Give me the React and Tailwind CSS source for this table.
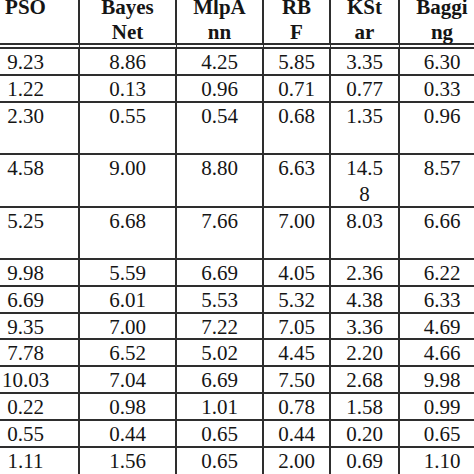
const header = ["PSO", "Bayes\nNet", "MlpA\nnn", "RB\nF", "KSt\nar", "Baggi\nng"];

const rows = [
  { h: "h-[26.5px]", cells: ["9.23", "8.86", "4.25", "5.85", "3.35", "6.30"] },
  { h: "h-[27px]", cells: ["1.22", "0.13", "0.96", "0.71", "0.77", "0.33"] },
  { h: "h-[52.5px]", cells: ["2.30", "0.55", "0.54", "0.68", "1.35", "0.96"] },
  { h: "h-[52.5px]", cells: ["4.58", "9.00", "8.80", "6.63", "14.5\n8", "8.57"] },
  { h: "h-[52.5px]", cells: ["5.25", "6.68", "7.66", "7.00", "8.03", "6.66"] },
  { h: "h-[26.8px]", cells: ["9.98", "5.59", "6.69", "4.05", "2.36", "6.22"] },
  { h: "h-[26.8px]", cells: ["6.69", "6.01", "5.53", "5.32", "4.38", "6.33"] },
  { h: "h-[26.8px]", cells: ["9.35", "7.00", "7.22", "7.05", "3.36", "4.69"] },
  { h: "h-[26.8px]", cells: ["7.78", "6.52", "5.02", "4.45", "2.20", "4.66"] },
  { h: "h-[26.8px]", cells: ["10.03", "7.04", "6.69", "7.50", "2.68", "9.98"] },
  { h: "h-[26.8px]", cells: ["0.22", "0.98", "1.01", "0.78", "1.58", "0.99"] },
  { h: "h-[26.8px]", cells: ["0.55", "0.44", "0.65", "0.44", "0.20", "0.65"] },
  { h: "h-[30px]", cells: ["1.11", "1.56", "0.65", "2.00", "0.69", "1.10"] },
];

const cols = "grid grid-cols-[107px_97px_87px_67px_69px_86px]";

const Cell = ({ text, className }) => (
  <div className={`border-r-2 border-[#2e2e2e] text-center whitespace-pre ${className}`}>
    {text}
  </div>
);

const App = () => {
  return (
    <div className="w-screen h-screen overflow-hidden bg-white text-[#151515] [font-family:'Liberation_Serif','Times_New_Roman',serif] text-[21px]">
      <div className="-ml-[27px] -mt-[5px] w-[513px]">
        <div className={cols}>
          {header.map((t) => (
            <Cell
              key={t}
              text={t}
              className="h-[54px] border-b-[6px] border-double font-bold leading-[25px]"
            />
          ))}
        </div>
        {rows.map((row, i) => (
          <div key={i} className={cols}>
            {row.cells.map((c, j) => (
              <Cell
                key={j}
                text={c}
                className={`${row.h} ${i === rows.length - 1 ? "" : "border-b-2"} leading-[26px]`}
              />
            ))}
          </div>
        ))}
      </div>
    </div>
  );
};

export default App;
